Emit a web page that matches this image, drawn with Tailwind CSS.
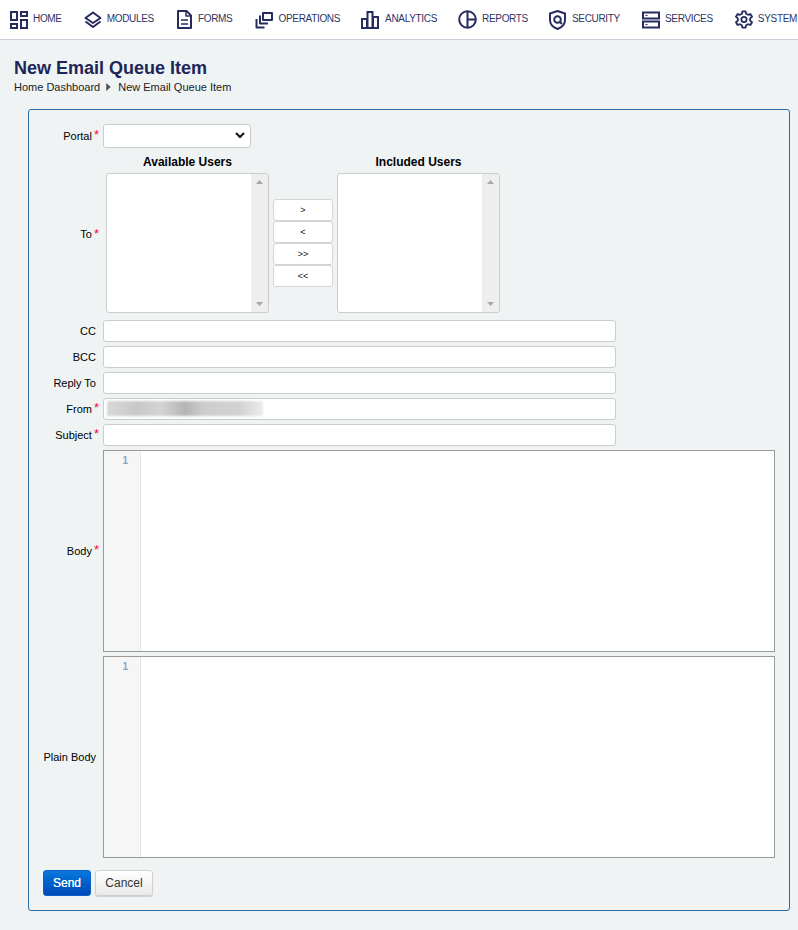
<!DOCTYPE html>
<html lang="en">
<head>
    <meta charset="UTF-8">
    <meta name="viewport" content="width=device-width, initial-scale=1.0">
    <title>New Email Queue Item</title>
    <script src="https://cdn.jsdelivr.net/npm/@tailwindcss/browser@4"></script>
</head>
<body class="bg-[#eff3f4] font-['Liberation_Sans',Arial,sans-serif] text-[11px] text-black overflow-hidden w-[798px] h-[930px]">

<!-- top nav -->
<nav class="h-[40px] bg-white border-b border-[#cfd0dc] flex items-center pl-[10px] gap-[21px] overflow-hidden whitespace-nowrap text-[10px] tracking-[-0.32px] text-[#2f3565]">
    <a class="flex items-center gap-[5px] shrink-0">
        <svg class="w-[18px] h-[18px]" viewBox="0 0 18 18" fill="none" stroke="#262c5e" stroke-width="2"><rect x="1" y="1" width="6" height="8"/><rect x="11" y="1" width="6" height="4"/><rect x="1" y="13" width="6" height="4"/><rect x="11" y="9" width="6" height="8"/></svg>
        <span class="mb-[2px]">HOME</span>
    </a>
    <a class="flex items-center gap-[5px] shrink-0 ml-[1px]">
        <svg class="w-[18px] h-[18px]" viewBox="0 0 18 18" fill="none" stroke="#262c5e" stroke-width="2" stroke-linejoin="round"><path d="M9 1.500 16.500 7 9 12 1.500 7Z"/><path d="M1.500 10.500 9 16l7.500-5.500"/></svg>
        <span class="mb-[2px]">MODULES</span>
    </a>
    <a class="flex items-center gap-[5px] shrink-0 ml-[1px]">
        <svg class="w-[17px] h-[19px]" viewBox="0 0 17 19" fill="none" stroke="#262c5e" stroke-width="2" stroke-linejoin="round"><path d="M2 1h8.500L15 5.500V18H2Z"/><path d="M10 1v5h5" stroke-width="1.500"/><path d="M5 10h7M5 14h7" stroke-width="1.600"/></svg>
        <span class="mb-[2px]">FORMS</span>
    </a>
    <a class="flex items-center gap-[5px] shrink-0 ml-[2px]">
        <svg class="w-[18px] h-[18px]" viewBox="0 0 18 18" fill="none" stroke="#262c5e" stroke-width="2" stroke-linejoin="round"><rect x="8" y="2" width="9" height="7"/><path d="M5 4.500v8h8"/><path d="M1.500 8v8.500h8"/></svg>
        <span class="mb-[2px]">OPERATIONS</span>
    </a>
    <a class="flex items-center gap-[6px] shrink-0">
        <svg class="w-[18px] h-[18px]" viewBox="0 0 18 18" fill="none" stroke="#262c5e" stroke-width="2"><rect x="1" y="8" width="5" height="9"/><rect x="6.500" y="1" width="5" height="16"/><rect x="12" y="6" width="5" height="11"/></svg>
        <span class="mb-[2px]">ANALYTICS</span>
    </a>
    <a class="flex items-center gap-[5px] shrink-0">
        <svg class="w-[19px] h-[19px]" viewBox="0 0 19 19" fill="none" stroke="#262c5e" stroke-width="2"><circle cx="9.500" cy="9.500" r="8.300"/><path d="M9.500 1v17M9.500 9.500H18"/></svg>
        <span class="mb-[2px]">REPORTS</span>
    </a>
    <a class="flex items-center gap-[6px] shrink-0">
        <svg class="w-[17px] h-[20px]" viewBox="0 0 17 20" fill="none" stroke="#262c5e" stroke-width="2" stroke-linejoin="round"><path d="M8.500 1 16 3.500V10c0 4.500-3.500 7.500-7.500 9C4.500 17.500 1 14.500 1 10V3.500Z"/><circle cx="8.500" cy="9.500" r="3.300"/><path d="m11 12 2 2"/></svg>
        <span class="mb-[2px]">SECURITY</span>
    </a>
    <a class="flex items-center gap-[5px] shrink-0 ml-[1px]">
        <svg class="w-[18px] h-[18px]" viewBox="0 0 18 18" fill="none" stroke="#262c5e" stroke-width="2"><rect x="1" y="1.500" width="16" height="6"/><rect x="1" y="10.500" width="16" height="6"/><path d="M3.500 4.500h2M3.500 13.500h2" stroke-width="1"/></svg>
        <span class="mb-[2px]">SERVICES</span>
    </a>
    <a class="flex items-center gap-[5px] shrink-0 ml-[1px]">
        <svg class="w-[18px] h-[19px]" viewBox="1 1 22 22" fill="none" stroke="#262c5e" stroke-width="2.200" stroke-linejoin="round"><circle cx="12" cy="12" r="3.200"/><path d="M10 2h4l.6 3 2.300 1.300 2.900-1 2 3.400-2.300 2 0 2.600 2.300 2-2 3.400-2.900-1-2.300 1.300-.6 3h-4l-.6-3-2.300-1.300-2.900 1-2-3.400 2.300-2 0-2.600-2.300-2 2-3.400 2.900 1L9.400 5Z"/></svg>
        <span class="mb-[2px]">SYSTEM</span>
    </a>
</nav>

<!-- page heading -->
<header class="pl-[14px] pt-[18px]">
    <h1 class="text-[18px] leading-[21px] font-bold text-[#1e2559]">New Email Queue Item</h1>
    <div class="flex items-center mt-[1px] text-[11px] leading-[14px] text-[#222]">
        Home Dashboard
        <svg class="w-[5px] h-[8px] ml-[6px] mr-[7px]" viewBox="0 0 4 7"><path d="M0 0l4 3.500L0 7Z" fill="#555"/></svg>
        New Email Queue Item
    </div>
</header>

<!-- form card -->
<main class="mt-[15px] ml-[28px] w-[762px] h-[802px] border border-[#2a6ca6] rounded-[3px] pt-[14px] flex flex-col">
    <div class="flex items-center h-[24px]">
        <label class="w-[74px] shrink-0 flex justify-end pr-[4px]">Portal<span class="text-[#f0142f] text-[13px] leading-[13px] ml-[2px]">*</span></label>
        <div class="relative w-[148px] h-[24px]">
            <select class="appearance-none w-full h-full bg-white border border-[#cccccc] rounded-[3px]"></select>
            <svg class="absolute right-[6px] top-[8px] w-[10px] h-[7px]" viewBox="0 0 10 7" fill="none" stroke="#111" stroke-width="2"><path d="M1 1l4 4 4-4"/></svg>
        </div>
    </div>

    <!-- user pickers -->
    <div class="flex mt-[6px]">
        <label class="w-[74px] shrink-0 flex justify-end items-center pr-[4px] pt-[2px]">To<span class="text-[#f0142f] text-[13px] leading-[13px] ml-[2px] mb-[3px]">*</span></label>
        <div class="ml-[3px] w-[163px]">
            <div class="h-[19px] text-center text-[12px] leading-[16px] font-bold">Available Users</div>
            <div class="h-[140px] bg-white border border-[#cccccc] rounded-[3px] flex justify-end overflow-hidden">
                <div class="w-[17px] bg-[#eeeeee] flex flex-col justify-between items-center py-[6px]">
                    <svg class="w-[7px] h-[4px]" viewBox="0 0 7 4"><path d="M3.500 0 7 4H0Z" fill="#a8a8a8"/></svg>
                    <svg class="w-[7px] h-[4px]" viewBox="0 0 7 4"><path d="M0 0h7L3.500 4Z" fill="#a8a8a8"/></svg>
                </div>
            </div>
        </div>
        <div class="ml-[4px] w-[60px] pt-[45px] flex flex-col text-[9px]">
            <button class="h-[22px] pt-[1px] bg-white border border-[#d4d4d4] rounded-[3px] text-[#111]">&gt;</button>
            <button class="h-[22px] pt-[1px] bg-white border border-[#d4d4d4] rounded-[3px] text-[#111]">&lt;</button>
            <button class="h-[22px] pt-[1px] bg-white border border-[#d4d4d4] rounded-[3px] text-[#111]">&gt;&gt;</button>
            <button class="h-[22px] pt-[1px] bg-white border border-[#d4d4d4] rounded-[3px] text-[#111]">&lt;&lt;</button>
        </div>
        <div class="ml-[4px] w-[163px]">
            <div class="h-[19px] text-center text-[12px] leading-[16px] font-bold">Included Users</div>
            <div class="h-[140px] bg-white border border-[#cccccc] rounded-[3px] flex justify-end overflow-hidden">
                <div class="w-[17px] bg-[#eeeeee] flex flex-col justify-between items-center py-[6px]">
                    <svg class="w-[7px] h-[4px]" viewBox="0 0 7 4"><path d="M3.500 0 7 4H0Z" fill="#a8a8a8"/></svg>
                    <svg class="w-[7px] h-[4px]" viewBox="0 0 7 4"><path d="M0 0h7L3.500 4Z" fill="#a8a8a8"/></svg>
                </div>
            </div>
        </div>
    </div>

    <!-- address fields -->
    <div class="mt-[7px] flex flex-col gap-[4px]">
        <div class="flex items-center">
            <label class="w-[74px] shrink-0 text-right pr-[7px]">CC</label>
            <input class="w-[513px] h-[22px] bg-white border border-[#cccccc] rounded-[3px]">
        </div>
        <div class="flex items-center">
            <label class="w-[74px] shrink-0 text-right pr-[7px]">BCC</label>
            <input class="w-[513px] h-[22px] bg-white border border-[#cccccc] rounded-[3px]">
        </div>
        <div class="flex items-center">
            <label class="w-[74px] shrink-0 text-right pr-[7px]">Reply To</label>
            <input class="w-[513px] h-[22px] bg-white border border-[#cccccc] rounded-[3px]">
        </div>
        <div class="flex items-center">
            <label class="w-[74px] shrink-0 flex justify-end pr-[4px]">From<span class="text-[#f0142f] text-[13px] leading-[13px] ml-[2px]">*</span></label>
            <div class="relative w-[513px] h-[22px] bg-white border border-[#cccccc] rounded-[3px]">
                <!-- redacted address -->
                <div class="absolute left-[3px] top-[2px] w-[156px] h-[15px] blur-[1px] bg-[linear-gradient(90deg,#d8d8d8_0%,#c8c8c8_20%,#d4d4d4_35%,#b4b4b4_50%,#cdcdcd_62%,#d2d2d2_85%,#ececec_100%)]"></div>
            </div>
        </div>
        <div class="flex items-center">
            <label class="w-[74px] shrink-0 flex justify-end pr-[4px]">Subject<span class="text-[#f0142f] text-[13px] leading-[13px] ml-[2px]">*</span></label>
            <input class="w-[513px] h-[22px] bg-white border border-[#cccccc] rounded-[3px]">
        </div>

        <!-- editors -->
        <div class="flex items-center">
            <label class="w-[74px] shrink-0 flex justify-end pr-[4px]">Body<span class="text-[#f0142f] text-[13px] leading-[13px] ml-[2px]">*</span></label>
            <div class="w-[672px] h-[202px] bg-white border border-[#9a9a9a] flex">
                <div class="w-[37px] h-full bg-[#f6f6f6] border-r border-[#e4e4e4] text-right pr-[12px] pt-[4px] text-[10px] leading-[12px] font-bold text-[#8aa4c4]">1</div>
            </div>
        </div>
        <div class="flex items-center">
            <label class="w-[74px] shrink-0 text-right pr-[7px]">Plain Body</label>
            <div class="w-[672px] h-[202px] bg-white border border-[#9a9a9a] flex">
                <div class="w-[37px] h-full bg-[#f6f6f6] border-r border-[#e4e4e4] text-right pr-[12px] pt-[4px] text-[10px] leading-[12px] font-bold text-[#8aa4c4]">1</div>
            </div>
        </div>
    </div>

    <div class="flex gap-[4px] mt-[12px] ml-[14px] text-[12px]">
        <button class="w-[48px] h-[26px] rounded-[3px] border border-[#0a5fc4] bg-gradient-to-b from-[#0a78dc] to-[#0048b8] text-white font-normal [text-shadow:0_0_0.4px_white]">Send</button>
        <button class="w-[58px] h-[26px] rounded-[3px] border border-[#d0d0d0] bg-gradient-to-b from-white to-[#e9e9e9] text-[#333] shadow-[0_1px_1px_rgba(0,0,0,0.15)]">Cancel</button>
    </div>
</main>

</body>
</html>
